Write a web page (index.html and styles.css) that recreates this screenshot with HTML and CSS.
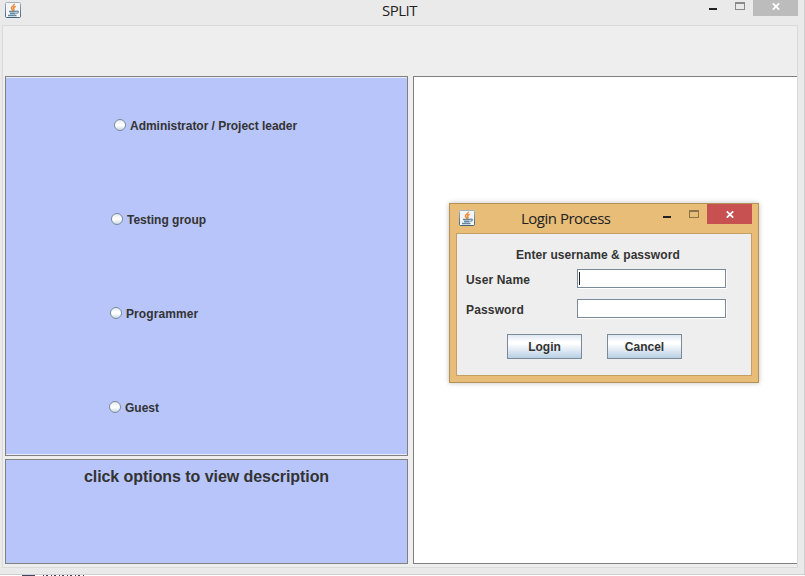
FILE: index.html
```
<!DOCTYPE html>
<html lang="en">
<head>
  <meta charset="UTF-8">
  <title>SPLIT</title>
  <link rel="stylesheet" href="styles.css">
</head>
<body>

  <!-- Shared Java cup icon -->
  <svg class="symbols" width="0" height="0">
    <defs>
      <linearGradient id="cupBorder" x1="0" y1="0" x2="0" y2="1">
        <stop offset="0" stop-color="#9fb3c3"/>
        <stop offset="1" stop-color="#41637c"/>
      </linearGradient>
    </defs>
    <symbol id="java" viewBox="0 0 16 16">
      <rect x="0.5" y="0.5" width="15" height="15" rx="1" fill="#f3f5f6" stroke="url(#cupBorder)"/>
      <path d="M9.3 1.8C9.8 3.8 6 4.3 6.4 6.2C6.6 7.2 7.9 7.7 7.7 8.8M10.8 4.4C8.6 5 8 6 8.9 7C9.4 7.7 9 8.3 8.4 8.8" fill="none" stroke="#ec8a35" stroke-width="1.5"/>
      <path d="M4 9.5H11.5M5 11.5H10.5M3 13.5H11.5M11.5 9.2C14.3 8.6 13.6 11.2 11.3 11.4" fill="none" stroke="#6487a1" stroke-width="1.3"/>
    </symbol>
  </svg>

  <!-- Main Window -->
  <div class="window">
    <header class="titlebar">
      <svg class="java-icon"><use href="#java"/></svg>
      <h1 class="title">SPLIT</h1>
      <div class="controls">
        <span class="minimize"></span>
        <span class="maximize"></span>
        <span class="close"><svg width="8" height="7" viewBox="0 0 8 7"><path d="M0.8 0.3L7.2 6.7M7.2 0.3L0.8 6.7"/></svg></span>
      </div>
    </header>

    <main class="client">
      <div class="left">
        <div class="panel options">
          <label class="option admin"><input type="radio" name="role"><span>Administrator / Project leader</span></label>
          <label class="option testing"><input type="radio" name="role"><span>Testing group</span></label>
          <label class="option programmer"><input type="radio" name="role"><span>Programmer</span></label>
          <label class="option guest"><input type="radio" name="role"><span>Guest</span></label>
        </div>
        <div class="panel description"><span>click options to view description</span></div>
      </div>
      <div class="right"></div>
    </main>
  </div>
  <div class="behind"></div>

  <!-- Login Dialog -->
  <div class="dialog">
    <header class="dialog-bar">
      <svg class="java-icon"><use href="#java"/></svg>
      <h2 class="title">Login Process</h2>
      <div class="controls">
        <span class="minimize"></span>
        <span class="maximize"></span>
        <span class="close"><svg width="8" height="7" viewBox="0 0 8 7"><path d="M0.8 0.3L7.2 6.7M7.2 0.3L0.8 6.7"/></svg></span>
      </div>
    </header>
    <form class="login">
      <p class="prompt"><span>Enter username &amp; password</span></p>
      <div class="field">
        <label for="user">User Name</label>
        <div class="text-box focused"><input id="user" type="text"></div>
      </div>
      <div class="field">
        <label for="pass">Password</label>
        <div class="text-box"><input id="pass" type="password"></div>
      </div>
      <div class="buttons">
        <button type="button">Login</button>
        <button type="button">Cancel</button>
      </div>
    </form>
  </div>

</body>
</html>
```
FILE: styles.css
```
* {
  box-sizing: border-box;
}

body {
  margin: 0;
  width: 805px;
  height: 576px;
  overflow: hidden;
  position: relative;
  background: #fff;
  color: #333;
  font: bold 12px/14px "Liberation Sans", Arial, sans-serif;
}

.symbols {
  display: block;
}

/* Main window */
.window {
  width: 805px;
  height: 575px;
  padding: 0 6px 6px 2px;
  display: flex;
  flex-direction: column;
  background: #eaeaea;
  border-right: 1px solid #cfcfcf;
  border-bottom: 1px solid #cfcfcf;
}

.titlebar {
  height: 25px;
  display: grid;
  grid-template-columns: 133px 1fr 135px;
  padding-left: 3px;
  flex: none;
}

.java-icon {
  display: block;
  width: 16px;
  height: 16px;
  margin-top: 2px;
}

.title {
  margin: 0;
  color: #222;
  font: 15px/20px "Open Sans", "Noto Sans", sans-serif;
  letter-spacing: -0.5px;
  text-align: center;
}

.titlebar .title {
  padding-right: 2px;
}

.controls {
  display: flex;
  justify-content: flex-end;
  align-items: flex-start;
}

.minimize {
  width: 8px;
  height: 2px;
  margin: 8px 18px 0 0;
  background: #222;
}

.maximize {
  width: 10px;
  height: 8px;
  margin: 2px 8px 0 0;
  border: 1px solid #8b8b8b;
  border-top-width: 2px;
}

.close {
  width: 45px;
  height: 16px;
  display: flex;
  justify-content: center;
  padding: 3px 0 0 1px;
  background: #bcbcbc;
}

.close path {
  stroke: #fff;
  stroke-width: 1.7;
}

/* Client area */
.client {
  flex: 1;
  display: flex;
  gap: 5px;
  padding: 50px 0 3px 2px;
  background: #eee;
  border: 1px solid #dadada;
}

.left {
  width: 403px;
  display: flex;
  flex-direction: column;
  gap: 3px;
}

.panel {
  border: 1px solid #808080;
  background: #b8c5fa;
}

.options {
  height: 380px;
  padding: 41px 0 0 108px;
  box-shadow: inset 0 1px #e8ebf2, inset 0 -1px #e8ebf2;
}

.option {
  display: flex;
  align-items: center;
  gap: 4px;
  height: 14px;
  margin-bottom: 80px;
}

.option input {
  appearance: none;
  width: 12px;
  height: 12px;
  margin: 0;
  border: 1px solid #7a8a99;
  border-radius: 50%;
  background: linear-gradient(#dde8f3, #fff 40%, #fff 55%, #c8d8e8);
}

.option span {
  padding-top: 1px;
}

.admin {
  letter-spacing: -0.03px;
}

.testing {
  margin-left: -3px;
}

.programmer {
  margin-left: -4px;
  letter-spacing: 0.1px;
}

.guest {
  margin-left: -5px;
}

.description {
  flex: 1;
  padding-top: 8px;
  font-size: 16px;
  line-height: 18px;
  letter-spacing: -0.06px;
  text-align: center;
}

.right {
  flex: 1;
  background: #fff;
  border: 1px solid #808080;
  border-right: 0;
}

/* Sliver of the page under the window */
.behind {
  height: 1px;
  width: 62px;
  margin-left: 22px;
  background: linear-gradient(90deg, #446 0 13px, #fff 13px 20px, transparent 20px), repeating-linear-gradient(90deg, #445 0 2px, #fff 2px 5px, #445 5px 6px, #fff 6px 8px);
}

/* Login dialog */
.dialog {
  position: absolute;
  left: 449px;
  top: 203px;
  width: 310px;
  height: 180px;
  display: flex;
  flex-direction: column;
  padding: 0 6px 6px;
  background: #e7bd78;
  border: 1px solid #b49156;
  box-shadow: 0 0 5px rgba(0, 0, 0, 0.25);
}

.dialog-bar {
  height: 29px;
  display: grid;
  grid-template-columns: 60px 1fr 100px;
  padding-left: 3px;
  flex: none;
}

.dialog .java-icon {
  margin-top: 6px;
}

.dialog .title {
  padding: 4px 0 0 2px;
  text-align: left;
  white-space: nowrap;
}

.dialog .minimize {
  margin-top: 12px;
}

.dialog .maximize {
  margin-top: 6px;
  border-color: #8c7349;
}

.dialog .close {
  height: 20px;
  padding-top: 7px;
  background: #c75050;
}

.login {
  flex: 1;
  margin: 0;
  padding: 14px 25px 0 9px;
  background: #eee;
  border: 1px solid #c39f65;
}

.prompt {
  margin: 0 0 7px 50px;
  letter-spacing: 0.07px;
}

.field {
  height: 20px;
  display: flex;
  justify-content: space-between;
  align-items: flex-start;
  margin-bottom: 10px;
}

.field label {
  padding-top: 4px;
  letter-spacing: 0.15px;
}

.text-box {
  width: 149px;
  height: 19px;
  display: flex;
  padding: 2px;
  background: #fff;
  border: 1px solid #7a8a99;
  box-shadow: 1px 1px #fff;
}

.text-box input {
  width: 100%;
  padding: 0;
  border: 0;
  outline: 0;
  background: transparent;
}

.focused {
  padding-left: 1px;
}

.focused input {
  border-left: 1px solid #222;
}

.buttons {
  display: flex;
  gap: 25px;
  margin: 15px 0 0 41px;
}

.buttons button {
  width: 75px;
  height: 25px;
  padding: 0;
  color: #333;
  font: inherit;
  border: 1px solid #7a8a99;
  border-radius: 0;
  background: linear-gradient(#dde8f3, #fff 30%, #fff 38%, #b8cfe5);
}
```
